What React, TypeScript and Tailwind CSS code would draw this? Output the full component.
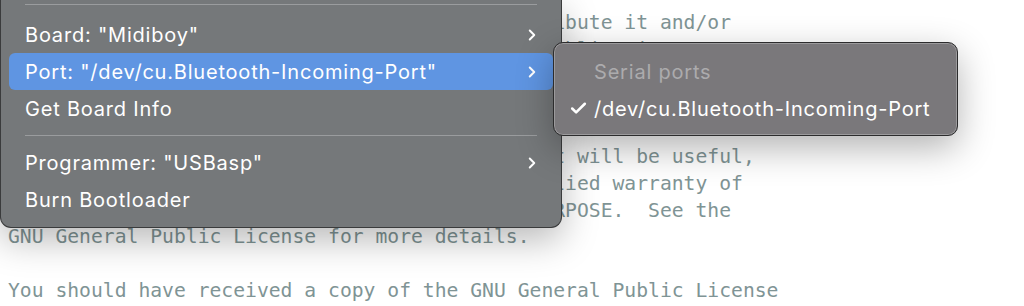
import { Check, ChevronRight } from "lucide-react";

const LICENSE = [
  "This program is free software; you can redistribute it and/or",
  "modify it under the terms of the GNU General Public License as",
  "published by the Free Software Foundation; either version 2 of",
  "the License, or (at your option) any later version.",
  "",
  "This program is distributed in the hope that it will be useful,",
  "but WITHOUT ANY WARRANTY; without even the implied warranty of",
  "MERCHANTABILITY or FITNESS FOR A PARTICULAR PURPOSE.  See the",
  "GNU General Public License for more details.",
  "",
  "You should have received a copy of the GNU General Public License",
];

type Item = { label: string; sub?: boolean; active?: boolean } | "sep";

const TOOLS: Item[] = [
  { label: 'Board: "Midiboy"', sub: true },
  { label: 'Port: "/dev/cu.Bluetooth-Incoming-Port"', sub: true, active: true },
  { label: "Get Board Info" },
  "sep",
  { label: 'Programmer: "USBasp"', sub: true },
  { label: "Burn Bootloader" },
];

function Separator() {
  return <div className="mx-[24px] h-px bg-[#9a9c9e]" />;
}

function MenuRow({ label, sub, active }: { label: string; sub?: boolean; active?: boolean }) {
  return (
    <div
      className={
        "flex h-[37px] items-center rounded-[6px] pl-[16px] pr-[12px] " +
        (active ? "bg-[#5f95e2]" : "")
      }
    >
      <span className="flex-1 whitespace-nowrap">{label}</span>
      {sub && <ChevronRight className="h-[18px] w-[18px]" strokeWidth={2.6} />}
    </div>
  );
}

export default function App() {
  return (
    <div className="relative h-[306px] w-[1024px] overflow-hidden bg-white">
      {/* editor text behind the menus */}
      <pre className="pl-[8px] pt-[10px] font-['DejaVu_Sans_Mono',monospace] text-[19.7px] leading-[26.8px] text-[#7f9495]">
        {LICENSE.join("\n")}
      </pre>

      {/* Tools menu (top is cut off by the screenshot) */}
      <div className="absolute left-0 top-0 w-[562px] rounded-b-[11px] border border-t-0 border-[#3a3b3c] bg-[#75787a] px-[8px] pb-[9px] pt-[4px] font-['Inter',sans-serif] text-[20px] tracking-[0.8px] text-white shadow-[0_12px_36px_rgba(0,0,0,0.28)]">
        <div className="-mx-[8px]">
          <Separator />
        </div>
        <div className="mt-[11px]">
          {TOOLS.map((item, i) =>
            item === "sep" ? (
              <div key={i} className="-mx-[8px] py-[8px]">
                <Separator />
              </div>
            ) : (
              <MenuRow key={i} {...item} />
            ),
          )}
        </div>
      </div>

      {/* Port submenu */}
      <div className="absolute left-[553px] top-[42px] w-[405px] rounded-[10px] border border-[#2c2c2d] bg-[#7a787b] pb-[8px] pt-[10px] font-['Inter',sans-serif] text-[20px] tracking-[0.8px] shadow-[inset_0_0_0_1px_rgba(255,255,255,0.25),0_12px_36px_rgba(0,0,0,0.3)]">
        <div className="flex h-[37px] items-center pl-[40px] text-[#acabad]">Serial ports</div>
        <div className="flex h-[37px] items-center pl-[15px] text-white">
          <Check className="mr-[6px] h-[19px] w-[19px]" strokeWidth={3.2} />
          <span className="whitespace-nowrap">/dev/cu.Bluetooth-Incoming-Port</span>
        </div>
      </div>
    </div>
  );
}
